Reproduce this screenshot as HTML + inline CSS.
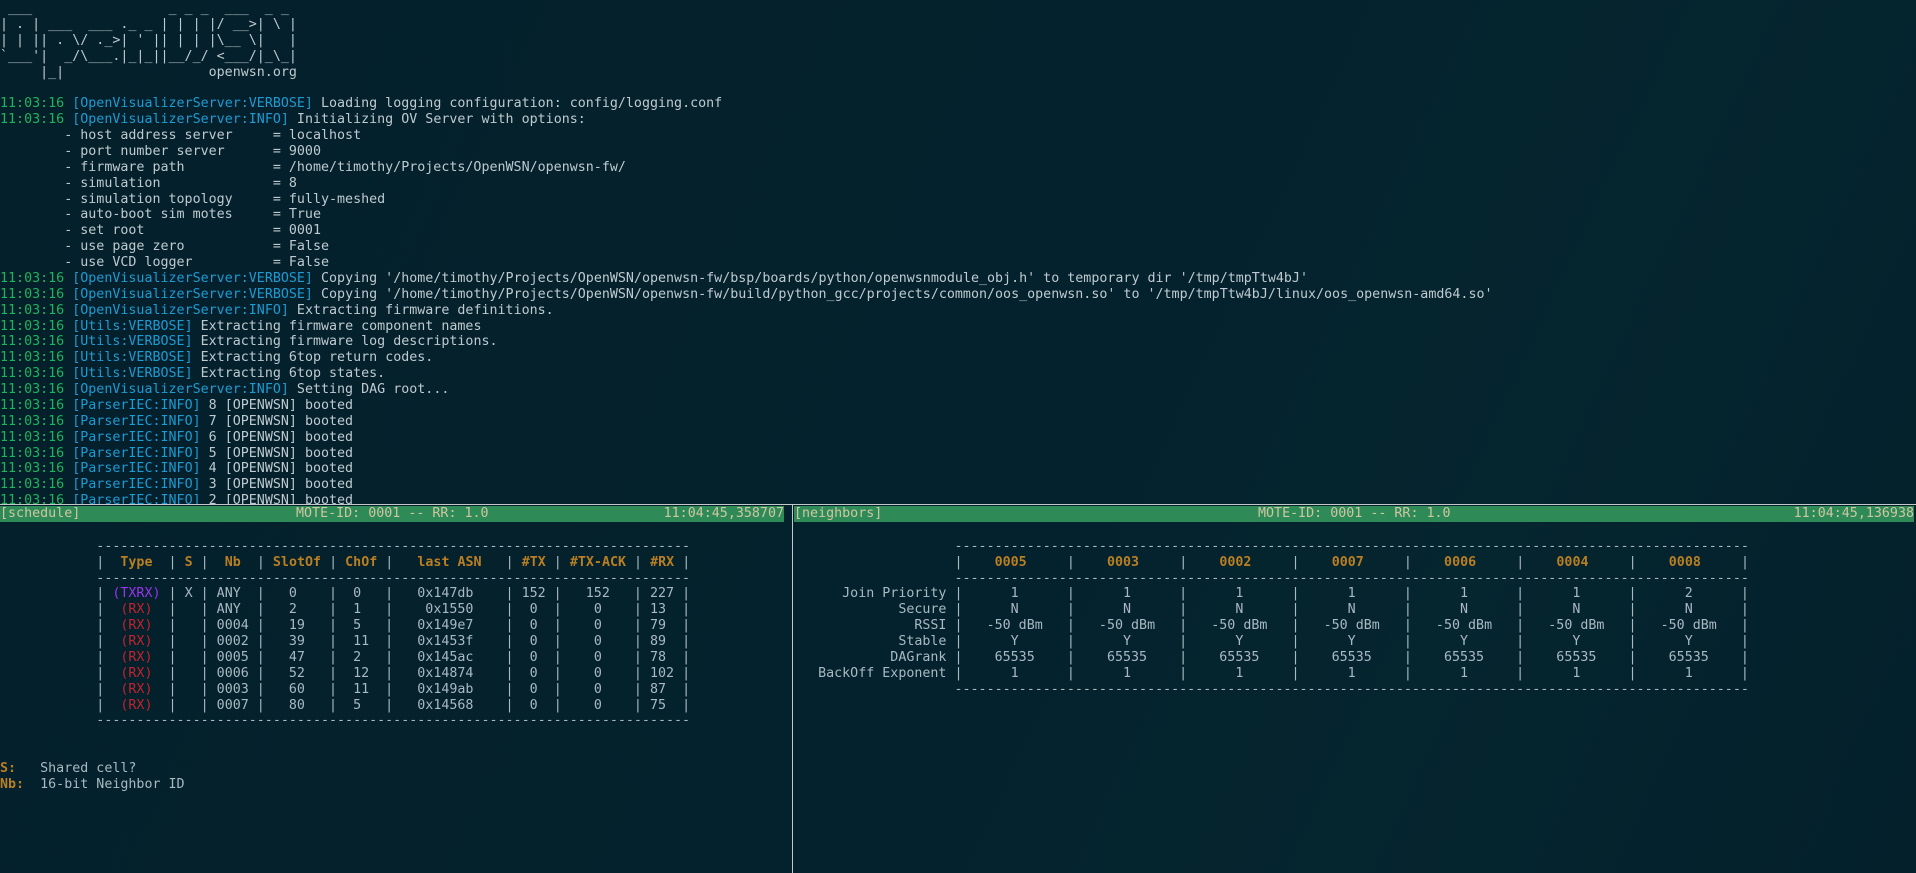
<!DOCTYPE html>
<html><head><meta charset="utf-8"><style>
html,body{margin:0;padding:0;width:1916px;height:873px;overflow:hidden;background:#03202b;}
body{background:linear-gradient(115deg,#03202b 0%,#04222d 55%,#05252f 75%,#03202b 100%);position:relative;font-family:"DejaVu Sans Mono","Liberation Mono",monospace;font-size:13.33px;}
pre{margin:0;position:absolute;font:inherit;line-height:15.87px;white-space:pre;color:#bfcacf;}
.g{color:#1fb45c}.b{color:#1d9bd3}.o{color:#b97f22;font-weight:bold}.p{color:#9a33ee}.r{color:#c2232f}.m{color:#a9b9c2}
.bar{position:absolute;top:506px;height:16px;background:#2e8b57;color:#cfc6a2;font-size:13.33px;line-height:16px;white-space:pre;overflow:hidden}
.bar span{position:absolute;top:0}
</style></head><body>
<div style="position:absolute;left:0;top:0;width:1916px;height:504px;overflow:hidden">
<pre style="left:0;top:1px;width:1916px"> ___                 _ _ _  ___  _ _
| . | ___  ___ ._ _ | | | |/ __>| \ |
| | || . \/ ._>| ' || | | |\__ \|   |
`___'|  _/\___.|_|_||__/_/ &lt;___/|_\_|
     |_|                  openwsn.org

<span class="g">11:03:16</span> <span class="b">[OpenVisualizerServer:VERBOSE]</span> Loading logging configuration: config/logging.conf
<span class="g">11:03:16</span> <span class="b">[OpenVisualizerServer:INFO]</span> Initializing OV Server with options:
        - host address server     = localhost
        - port number server      = 9000
        - firmware path           = /home/timothy/Projects/OpenWSN/openwsn-fw/
        - simulation              = 8
        - simulation topology     = fully-meshed
        - auto-boot sim motes     = True
        - set root                = 0001
        - use page zero           = False
        - use VCD logger          = False
<span class="g">11:03:16</span> <span class="b">[OpenVisualizerServer:VERBOSE]</span> Copying '/home/timothy/Projects/OpenWSN/openwsn-fw/bsp/boards/python/openwsnmodule_obj.h' to temporary dir '/tmp/tmpTtw4bJ'
<span class="g">11:03:16</span> <span class="b">[OpenVisualizerServer:VERBOSE]</span> Copying '/home/timothy/Projects/OpenWSN/openwsn-fw/build/python_gcc/projects/common/oos_openwsn.so' to '/tmp/tmpTtw4bJ/linux/oos_openwsn-amd64.so'
<span class="g">11:03:16</span> <span class="b">[OpenVisualizerServer:INFO]</span> Extracting firmware definitions.
<span class="g">11:03:16</span> <span class="b">[Utils:VERBOSE]</span> Extracting firmware component names
<span class="g">11:03:16</span> <span class="b">[Utils:VERBOSE]</span> Extracting firmware log descriptions.
<span class="g">11:03:16</span> <span class="b">[Utils:VERBOSE]</span> Extracting 6top return codes.
<span class="g">11:03:16</span> <span class="b">[Utils:VERBOSE]</span> Extracting 6top states.
<span class="g">11:03:16</span> <span class="b">[OpenVisualizerServer:INFO]</span> Setting DAG root...
<span class="g">11:03:16</span> <span class="b">[ParserIEC:INFO]</span> 8 [OPENWSN] booted
<span class="g">11:03:16</span> <span class="b">[ParserIEC:INFO]</span> 7 [OPENWSN] booted
<span class="g">11:03:16</span> <span class="b">[ParserIEC:INFO]</span> 6 [OPENWSN] booted
<span class="g">11:03:16</span> <span class="b">[ParserIEC:INFO]</span> 5 [OPENWSN] booted
<span class="g">11:03:16</span> <span class="b">[ParserIEC:INFO]</span> 4 [OPENWSN] booted
<span class="g">11:03:16</span> <span class="b">[ParserIEC:INFO]</span> 3 [OPENWSN] booted
<span class="g">11:03:16</span> <span class="b">[ParserIEC:INFO]</span> 2 [OPENWSN] booted</pre>
</div>

<div style="position:absolute;left:0;top:504px;width:1916px;height:1px;background:#c4c8c8"></div>
<div style="position:absolute;left:792px;top:504px;width:1px;height:369px;background:#c4c8c8"></div>

<div class="bar" style="left:0;width:784px"><span style="left:0">[schedule]</span><span style="left:296px">MOTE-ID: 0001 -- RR: 1.0</span><span style="right:0">11:04:45,358707</span></div>
<div class="bar" style="left:794px;width:1120px"><span style="left:0">[neighbors]</span><span style="left:464px">MOTE-ID: 0001 -- RR: 1.0</span><span style="right:0">11:04:45,136938</span></div>

<pre class="m" style="left:0;top:538.8px">            --------------------------------------------------------------------------
            |  <span class="o">Type</span>  | <span class="o">S</span> |  <span class="o">Nb</span>  | <span class="o">SlotOf</span> | <span class="o">ChOf</span> |   <span class="o">last ASN</span>   | <span class="o">#TX</span> | <span class="o">#TX-ACK</span> | <span class="o">#RX</span> |
            --------------------------------------------------------------------------
            | <span class="p">(TXRX)</span> | X | ANY  |   0    |  0   |   0x147db    | 152 |   152   | 227 |
            |  <span class="r">(RX)</span>  |   | ANY  |   2    |  1   |    0x1550    |  0  |    0    | 13  |
            |  <span class="r">(RX)</span>  |   | 0004 |   19   |  5   |   0x149e7    |  0  |    0    | 79  |
            |  <span class="r">(RX)</span>  |   | 0002 |   39   |  11  |   0x1453f    |  0  |    0    | 89  |
            |  <span class="r">(RX)</span>  |   | 0005 |   47   |  2   |   0x145ac    |  0  |    0    | 78  |
            |  <span class="r">(RX)</span>  |   | 0006 |   52   |  12  |   0x14874    |  0  |    0    | 102 |
            |  <span class="r">(RX)</span>  |   | 0003 |   60   |  11  |   0x149ab    |  0  |    0    | 87  |
            |  <span class="r">(RX)</span>  |   | 0007 |   80   |  5   |   0x14568    |  0  |    0    | 75  |
            --------------------------------------------------------------------------


<span class="o">S:</span>   Shared cell?
<span class="o">Nb:</span>  16-bit Neighbor ID</pre>

<pre class="m" style="left:794px;top:538.8px">                    ---------------------------------------------------------------------------------------------------
                    |    <span class="o">0005</span>     |    <span class="o">0003</span>     |    <span class="o">0002</span>     |    <span class="o">0007</span>     |    <span class="o">0006</span>     |    <span class="o">0004</span>     |    <span class="o">0008</span>     |
                    ---------------------------------------------------------------------------------------------------
      Join Priority |      1      |      1      |      1      |      1      |      1      |      1      |      2      |
             Secure |      N      |      N      |      N      |      N      |      N      |      N      |      N      |
               RSSI |   -50 dBm   |   -50 dBm   |   -50 dBm   |   -50 dBm   |   -50 dBm   |   -50 dBm   |   -50 dBm   |
             Stable |      Y      |      Y      |      Y      |      Y      |      Y      |      Y      |      Y      |
            DAGrank |    65535    |    65535    |    65535    |    65535    |    65535    |    65535    |    65535    |
   BackOff Exponent |      1      |      1      |      1      |      1      |      1      |      1      |      1      |
                    ---------------------------------------------------------------------------------------------------</pre>
</body></html>
